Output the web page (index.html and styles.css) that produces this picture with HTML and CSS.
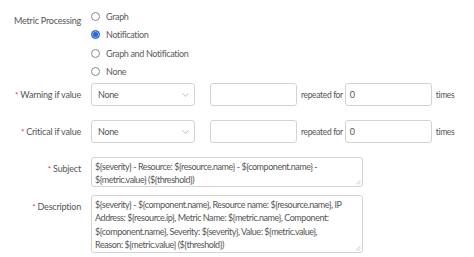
FILE: index.html
```html
<!DOCTYPE html>
<html>
<head>
<meta charset="utf-8">
<link rel="stylesheet" href="styles.css">
</head>
<body>
<form class="form">
  <div class="row row-radio">
    <div class="label label-radio">Metric Processing</div>
    <div class="radios">
      <label class="radio"><span class="dot"></span>Graph</label>
      <label class="radio"><span class="dot checked"></span>Notification</label>
      <label class="radio"><span class="dot"></span>Graph and Notification</label>
      <label class="radio"><span class="dot"></span>None</label>
    </div>
  </div>
  <div class="row row-threshold">
    <div class="label"><span class="req">*</span> Warning if value</div>
    <div class="controls">
      <div class="select"><span>None</span><svg class="chev" width="7" height="4" viewBox="0 0 7 4"><path d="M0.5 0.5 L3.5 3.3 L6.5 0.5" fill="none" stroke="#b5b5b5" stroke-width="0.9"/></svg></div>
      <div class="input value"></div>
      <span class="txt rep">repeated for</span>
      <div class="input count">0</div>
      <span class="txt times">times</span>
    </div>
  </div>
  <div class="row row-threshold">
    <div class="label"><span class="req">*</span> Critical if value</div>
    <div class="controls">
      <div class="select"><span>None</span><svg class="chev" width="7" height="4" viewBox="0 0 7 4"><path d="M0.5 0.5 L3.5 3.3 L6.5 0.5" fill="none" stroke="#b5b5b5" stroke-width="0.9"/></svg></div>
      <div class="input value"></div>
      <span class="txt rep">repeated for</span>
      <div class="input count">0</div>
      <span class="txt times">times</span>
    </div>
  </div>
  <div class="row row-subject">
    <div class="label label-ta"><span class="req">*</span> Subject</div>
    <div class="textarea subject">${severity} - Resource: ${resource.name} - ${component.name} -<br>${metric.value} (${threshold})<svg class="grip" width="6" height="6" viewBox="0 0 6 6"><path d="M5.5 1 L1 5.5 M5.5 3.5 L3.5 5.5" stroke="#bbb" stroke-width="0.8"/></svg></div>
  </div>
  <div class="row row-desc">
    <div class="label label-ta"><span class="req">*</span> Description</div>
    <div class="textarea desc">${severity} - ${component.name}, Resource name: ${resource.name}, IP<br>Address: ${resource.ip}, Metric Name: ${metric.name}, Component:<br>${component.name}, Severity: ${severity}, Value: ${metric.value},<br>Reason: ${metric.value} (${threshold})<svg class="grip" width="6" height="6" viewBox="0 0 6 6"><path d="M5.5 1 L1 5.5 M5.5 3.5 L3.5 5.5" stroke="#bbb" stroke-width="0.8"/></svg></div>
  </div>
</form>
</body>
</html>
```
FILE: styles.css
```css
html, body {
  margin: 0;
  padding: 0;
  background: #fff;
}
body {
  font-family: "Lato", "Open Sans", sans-serif;
  font-size: 9px;
  letter-spacing: -0.35px;
  color: #555;
  width: 474px;
  height: 257px;
  overflow: hidden;
}
.form {
  display: flex;
  flex-direction: column;
  padding-top: 7px;
}
.row {
  display: flex;
  align-items: flex-start;
}
.label {
  width: 91px;
  flex: none;
  text-align: right;
  padding-right: 10px;
  box-sizing: border-box;
  white-space: nowrap;
  letter-spacing: -0.2px;
}
.req {
  color: #d9363e;
  font-size: 8px;
}
.label-radio {
  padding-top: 8px;
  line-height: 11px;
}
.radios {
  display: flex;
  flex-direction: column;
}
.radio {
  display: flex;
  align-items: center;
  height: 18.5px;
  color: #5c5c5c;
}
.dot {
  width: 7px;
  height: 7px;
  border: 1px solid #8a8a8a;
  border-radius: 50%;
  margin-right: 6px;
  flex: none;
  background: #fff;
}
.dot.checked {
  border-color: #2d67d3;
  background: #2d67d3;
  box-shadow: inset 0 0 0 1px #8fb0ee;
}
.row-threshold {
  margin-top: 2px;
  height: 23px;
  margin-bottom: 12px;
}
.row-threshold .label {
  line-height: 23px;
}
.controls {
  display: flex;
  align-items: center;
  height: 23px;
}
.select {
  width: 104px;
  height: 23px;
  box-sizing: border-box;
  border: 1px solid #d3d3d3;
  border-radius: 3px;
  display: flex;
  align-items: center;
  justify-content: space-between;
  padding: 0 5px 0 6px;
  color: #555;
}
.input {
  height: 23px;
  width: 87px;
  box-sizing: border-box;
  border: 1px solid #d3d3d3;
  border-radius: 3px;
  display: flex;
  align-items: center;
  padding-left: 4px;
  color: #555;
}
.value {
  margin-left: 15px;
}
.txt {
  white-space: nowrap;
  color: #555;
  font-size: 8.5px;
}
.rep {
  margin-left: 4px;
  margin-right: 2px;
}
.times {
  margin-left: 4px;
}
.row-subject {
  margin-top: 2px;
}
.label-ta {
  padding-top: 5px;
  line-height: 13px;
}
.textarea {
  position: relative;
  width: 272px;
  box-sizing: border-box;
  border: 1px solid #d3d3d3;
  border-radius: 3px;
  padding: 2px 3px;
  line-height: 13.3px;
  color: #555;
  font-size: 9px;
  white-space: nowrap;
  letter-spacing: -0.45px;
}
.subject {
  height: 30px;
}
.row-desc {
  margin-top: 8px;
}
.desc {
  height: 58px;
}
.grip {
  position: absolute;
  right: 1px;
  bottom: 1px;
}
```
